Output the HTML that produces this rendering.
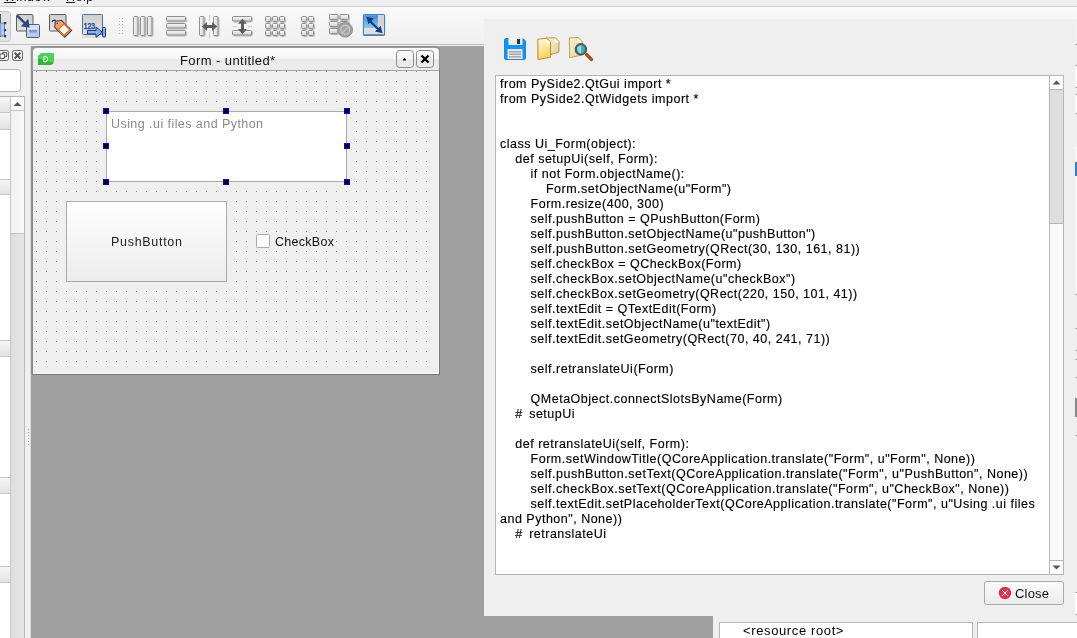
<!DOCTYPE html>
<html><head><meta charset="utf-8">
<style>
*{box-sizing:border-box}
html,body{margin:0;padding:0}
body{width:1077px;height:638px;overflow:hidden;position:relative;background:#efefef;font-family:"Liberation Sans",sans-serif;font-size:12px;color:#000}
.a{position:absolute}
.t{white-space:pre;position:absolute;line-height:15px}
.cl{height:15px;line-height:15px;white-space:pre;font-size:12.5px;letter-spacing:0.5px;-webkit-text-stroke:0.15px #000}
svg{position:absolute;overflow:visible}
body>div.t,#code,#dlg>div.t{will-change:transform}
</style></head><body>
<!-- menubar remnant -->
<div class="a" style="left:0;top:0;width:1077px;height:7px;background:#efefef"></div>
<div class="t" style="left:4px;top:-10px;font-size:12.5px;letter-spacing:0.5px;color:#111">Window</div>
<div class="t" style="left:66px;top:-10px;font-size:12.5px;letter-spacing:0.5px;color:#111">Help</div>
<div class="a" style="left:0;top:2px;width:1077px;height:4px;background:#efefef"></div>
<div class="a" style="left:4px;top:2px;width:12px;height:1px;background:#222"></div>
<div class="a" style="left:66px;top:2px;width:9px;height:1px;background:#222"></div>
<div class="a" style="left:87px;top:1px;width:1px;height:3px;background:#222"></div>
<div class="a" style="left:0;top:6px;width:1077px;height:1px;background:#d0d0d0"></div>
<!-- toolbar -->
<div class="a" style="left:0;top:7px;width:1077px;height:37px;background:linear-gradient(#f9f9f9,#f0f0f0)"></div>
<div class="a" style="left:0;top:44px;width:1077px;height:1px;background:#bdbdbd"></div>
<div class="a" style="left:0;top:45px;width:1077px;height:1px;background:#f2f2f2"></div>
<svg style="left:0;top:0" width="400" height="45" viewBox="0 0 400 45">
<defs>
<linearGradient id="bdk" x1="0" y1="0" x2="0" y2="1"><stop offset="0" stop-color="#5a7db8"/><stop offset="1" stop-color="#a8c6ee"/></linearGradient>
<linearGradient id="asz" x1="0" y1="0" x2="0" y2="1"><stop offset="0" stop-color="#4f86d2"/><stop offset="1" stop-color="#86cdea"/></linearGradient>
<filter id="sh" x="-20%" y="-20%" width="150%" height="150%"><feDropShadow dx="0.8" dy="0.8" stdDeviation="0.4" flood-color="#000" flood-opacity="0.3"/></filter>
<linearGradient id="gg" x1="0" y1="0" x2="0" y2="1"><stop offset="0" stop-color="#cfcfcf"/><stop offset="1" stop-color="#e4e4e4"/></linearGradient>
<linearGradient id="bb" x1="0" y1="0" x2="0" y2="1"><stop offset="0" stop-color="#d6e6fb"/><stop offset="1" stop-color="#a9c8f2"/></linearGradient>
<linearGradient id="bar" x1="0" y1="0" x2="1" y2="0"><stop offset="0" stop-color="#fafafa"/><stop offset="1" stop-color="#cfcfcf"/></linearGradient>
<linearGradient id="barh" x1="0" y1="0" x2="0" y2="1"><stop offset="0" stop-color="#fafafa"/><stop offset="1" stop-color="#cfcfcf"/></linearGradient>
</defs>
<!-- highlighted first button -->
<rect x="-4" y="11.5" width="14.5" height="30" rx="3" fill="#e2e2e2" stroke="#c4c4c4"/>
<rect x="-2" y="14" width="3" height="23" fill="#555"/>
<rect x="0" y="23" width="4.5" height="13" fill="#a9c8f4" stroke="#5a6e8a" stroke-width="0.8"/>
<rect x="4" y="22" width="2.2" height="2.2" fill="#1f3f78"/>
<rect x="4" y="29" width="2.2" height="2.2" fill="#1f3f78"/>
<rect x="4" y="35" width="2.2" height="2.2" fill="#1f3f78"/>
<!-- signals/slots -->
<rect x="16.5" y="14.5" width="16.5" height="16.5" rx="1" fill="url(#gg)" stroke="#5c5c5c"/>
<rect x="26.5" y="24.5" width="13" height="13" rx="1" fill="url(#bb)" stroke="#5c5c5c"/>
<rect x="29" y="29.5" width="8" height="4" fill="url(#bdk)"/>
<rect x="29" y="28.5" width="8" height="1" fill="#fff"/>
<path d="M17.2 15.6 L24.5 22.9" stroke="#2b4a78" stroke-width="2.3"/><path d="M29.6 27.8 L20.8 26.3 L28.3 18.8 Z" fill="#2b4a78"/>
<!-- buddy -->
<rect x="49.5" y="14.5" width="16.5" height="16.5" rx="1" fill="url(#gg)" stroke="#5c5c5c"/>
<path d="M52 22 Q53 19.5 56 20.5" stroke="#222" stroke-width="1.2" fill="none"/>
<path d="M55.3 21.3 L61.5 20.3 L71.6 30.4 L64.8 37.2 L54.7 27.4 Z" fill="#f9a060" stroke="#2c4468" stroke-width="1.1"/>
<path d="M64 23.8 L69.8 30 L64 35.6 L58.3 29.6 Z" fill="#fff" stroke="#ff6a10" stroke-width="1.4"/>
<circle cx="57.2" cy="23.2" r="0.8" fill="#2c4468"/>
<!-- tab order -->
<rect x="82" y="35" width="18" height="3" fill="#d6d6d6" opacity="0.7"/>
<rect x="82.5" y="14.5" width="20" height="20" rx="1" fill="url(#gg)" stroke="#51709e"/>
<text x="83.8" y="28.9" font-family="Liberation Sans" font-size="9.2" fill="#1a4ca6" stroke="#1a4ca6" stroke-width="0.5" textLength="11.2" lengthAdjust="spacingAndGlyphs">123</text>
<path d="M87.5 30.5 L96 30.5 L96 27 L102.3 32.2 L96 37.3 L96 34 L87.5 34 Z" fill="#7fb2f2" stroke="#1d3566" stroke-width="1"/>
<rect x="102.5" y="27.5" width="3" height="9.5" rx="1" fill="#7fb0f2" stroke="#1d3566" stroke-width="1"/>
<!-- separator -->
<g fill="#b8b8b8">
<rect x="119" y="18" width="1" height="1"/><rect x="122" y="18" width="1" height="1"/>
<rect x="119" y="21" width="1" height="1"/><rect x="122" y="21" width="1" height="1"/>
<rect x="119" y="24" width="1" height="1"/><rect x="122" y="24" width="1" height="1"/>
<rect x="119" y="27" width="1" height="1"/><rect x="122" y="27" width="1" height="1"/>
<rect x="119" y="30" width="1" height="1"/><rect x="122" y="30" width="1" height="1"/>
<rect x="119" y="33" width="1" height="1"/><rect x="122" y="33" width="1" height="1"/>
</g>
<!-- layout horiz -->
<g stroke="#8e8e8e" stroke-width="1" filter="url(#sh)" fill="url(#bar)">
<rect x="133.5" y="16.5" width="4.5" height="19" rx="1"/>
<rect x="140.5" y="16.5" width="4.5" height="19" rx="1"/>
<rect x="147.5" y="16.5" width="4.5" height="19" rx="1"/>
</g>
<!-- layout vert -->
<g stroke="#8e8e8e" stroke-width="1" filter="url(#sh)" fill="url(#barh)">
<rect x="166.5" y="16.5" width="19" height="4.5" rx="1"/>
<rect x="166.5" y="23.5" width="19" height="4.5" rx="1"/>
<rect x="166.5" y="30.5" width="19" height="4.5" rx="1"/>
</g>
<!-- splitter h -->
<g stroke="#8e8e8e" stroke-width="1" filter="url(#sh)" fill="url(#bar)">
<rect x="199.5" y="16.5" width="4.5" height="19" rx="1"/>
<rect x="213.5" y="16.5" width="4.5" height="19" rx="1"/>
</g>
<path d="M209.5 15 V21 M209.5 32 V38" stroke="#777" stroke-width="0.6" opacity="0.6"/>
<path d="M201.8 26.5 L207 22 V25 H212 V22 L217.2 26.5 L212 31 V28 H207 V31 Z" fill="#5e5e5e"/>
<!-- splitter v -->
<g stroke="#8e8e8e" stroke-width="1" filter="url(#sh)" fill="url(#barh)">
<rect x="232.5" y="16.5" width="19" height="4.5" rx="1"/>
<rect x="232.5" y="30.5" width="19" height="4.5" rx="1"/>
</g>
<path d="M233 26.5 H237 M248 26.5 H252" stroke="#777" stroke-width="0.6" opacity="0.6"/>
<path d="M242.5 18.7 L247 23.8 H244 V29 H247 L242.5 34.2 L238 29 H241 V23.8 H238 Z" fill="#5e5e5e"/>
<!-- grid -->
<g stroke="#8e8e8e" stroke-width="1" filter="url(#sh)" fill="url(#barh)">
<rect x="265.5" y="16.5" width="5" height="5" rx="1"/><rect x="272.5" y="16.5" width="5" height="5" rx="1"/><rect x="279.5" y="16.5" width="5" height="5" rx="1"/>
<rect x="265.5" y="23.5" width="5" height="5" rx="1"/><rect x="272.5" y="23.5" width="5" height="5" rx="1"/><rect x="279.5" y="23.5" width="5" height="5" rx="1"/>
<rect x="265.5" y="30.5" width="5" height="5" rx="1"/><rect x="272.5" y="30.5" width="5" height="5" rx="1"/><rect x="279.5" y="30.5" width="5" height="5" rx="1"/>
<!-- form layout -->
<rect x="301.5" y="16.5" width="5" height="5" rx="1"/><rect x="308.5" y="16.5" width="5" height="5" rx="1"/>
<rect x="301.5" y="23.5" width="5" height="5" rx="1"/><rect x="308.5" y="23.5" width="5" height="5" rx="1"/>
<rect x="301.5" y="30.5" width="5" height="5" rx="1"/><rect x="308.5" y="30.5" width="5" height="5" rx="1"/>
<!-- break layout -->
<rect x="329.5" y="14.5" width="8.5" height="5" rx="0.8"/><rect x="340" y="14.5" width="8.5" height="5" rx="0.8"/>
<rect x="329.5" y="21.5" width="8.5" height="5" rx="0.8"/><rect x="340" y="21.5" width="8.5" height="5" rx="0.8"/>
<rect x="329.5" y="28.5" width="8.5" height="5" rx="0.8"/>
</g>
<circle cx="345.2" cy="29.8" r="7.3" fill="#a4a4a4" stroke="#8e8e8e"/>
<circle cx="345.2" cy="29.8" r="4.4" fill="none" stroke="#c8c8c8" stroke-width="1.2"/>
<path d="M342.2 32.8 L348.2 26.8" stroke="#c8c8c8" stroke-width="1.2"/>
<!-- adjust size -->
<rect x="363.5" y="14.5" width="21" height="21" rx="1" fill="#e4e4e4" stroke="#3b7fd8" stroke-width="1.2"/>
<rect x="364.2" y="15.2" width="13.8" height="12.8" fill="url(#asz)"/>
<rect x="378" y="15.2" width="5.8" height="19.6" fill="#d4d4d4"/>
<rect x="364.2" y="28" width="19.6" height="6.8" fill="#e0e0e0"/>
<rect x="364.2" y="34" width="19.6" height="0.8" fill="#777"/>
<path d="M369.5 20.5 L380 31" stroke="#0d3f8c" stroke-width="2.2"/>
<path d="M366.5 16.8 L374 18.5 L368.3 24.2 Z M382.5 33.2 L375 31.5 L380.7 25.8 Z" fill="#0d3f8c"/>
</svg>
<!-- left dock -->
<div class="a" style="left:0;top:46px;width:31px;height:592px;background:#efefef"></div>
<svg style="left:0;top:46px" width="31" height="592" viewBox="0 0 31 592">
<!-- float / close buttons -->
<rect x="-3.5" y="4.5" width="12" height="10" rx="2" fill="#f4f4f4" stroke="#686868"/>
<rect x="2.5" y="6.5" width="4.2" height="4.2" rx="0.8" fill="#fafafa" stroke="#555" stroke-width="1.1"/>
<rect x="0" y="8" width="4.5" height="4.5" rx="0.8" fill="#fff" stroke="#555" stroke-width="1.1"/>
<rect x="12.5" y="4.5" width="10" height="10" rx="2" fill="#f4f4f4" stroke="#686868"/>
<path d="M14.6 6.7 L20.4 12.5 M20.4 6.7 L14.6 12.5" stroke="#555" stroke-width="2"/>
<!-- line edit -->
<rect x="-3.5" y="23.5" width="24" height="22" rx="3" fill="#fff" stroke="#b4b4b4"/>
<!-- table outer -->
<rect x="-1" y="50.5" width="26" height="541" fill="#fff" stroke="#b4b4b4"/>
</svg>
<!-- headers -->
<div class="a" style="left:0;top:97px;width:11px;height:16px;background:linear-gradient(#f6f6f6,#e2e2e2);border-right:1px solid #c6c6c6;border-bottom:1px solid #c6c6c6"></div>
<div class="a" style="left:0;top:113px;width:11px;height:17px;background:linear-gradient(#f6f6f6,#e2e2e2);border-right:1px solid #c6c6c6;border-bottom:1px solid #c6c6c6"></div>
<div class="a" style="left:0;top:130px;width:11px;height:49px;background:#fff;border-right:1px solid #c6c6c6"></div>
<div class="a" style="left:0;top:179px;width:11px;height:16px;background:linear-gradient(#f6f6f6,#e2e2e2);border-right:1px solid #c6c6c6;border-top:1px solid #c6c6c6;border-bottom:1px solid #c6c6c6"></div>
<div class="a" style="left:0;top:195px;width:11px;height:145px;background:#fff;border-right:1px solid #c6c6c6"></div>
<div class="a" style="left:0;top:340px;width:11px;height:17px;background:linear-gradient(#f6f6f6,#e2e2e2);border-right:1px solid #c6c6c6;border-top:1px solid #c6c6c6;border-bottom:1px solid #c6c6c6"></div>
<div class="a" style="left:0;top:357px;width:11px;height:120px;background:#fff;border-right:1px solid #c6c6c6"></div>
<div class="a" style="left:0;top:477px;width:11px;height:17px;background:linear-gradient(#f6f6f6,#e2e2e2);border-right:1px solid #c6c6c6;border-top:1px solid #c6c6c6;border-bottom:1px solid #c6c6c6"></div>
<div class="a" style="left:0;top:494px;width:11px;height:73px;background:#fff;border-right:1px solid #c6c6c6"></div>
<div class="a" style="left:0;top:566px;width:11px;height:17px;background:linear-gradient(#f6f6f6,#e2e2e2);border-right:1px solid #c6c6c6;border-top:1px solid #c6c6c6;border-bottom:1px solid #c6c6c6"></div>
<div class="a" style="left:0;top:583px;width:11px;height:55px;background:#fff;border-right:1px solid #c6c6c6"></div>
<!-- scrollbar -->
<div class="a" style="left:11px;top:97px;width:14px;height:541px;background:linear-gradient(90deg,#f0f0f0,#fafafa);border-right:1px solid #b8b8b8"></div>
<div class="a" style="left:11px;top:97px;width:13px;height:14px;background:#fff;border-bottom:1px solid #c6c6c6"></div>
<svg style="left:11px;top:97px" width="13" height="14"><path d="M2.5 9 L6.5 5 L10.5 9 Z" fill="#555"/></svg>
<div class="a" style="left:11px;top:233px;width:14px;height:405px;background:linear-gradient(90deg,#dedede,#e6e6e6);border-right:1px solid #b8b8b8;border-top:1px solid #c0c0c0"></div>
<!-- splitter -->
<div class="a" style="left:25px;top:46px;width:6px;height:592px;background:#efefef;border-right:1px solid #dadada"></div>
<g></g>
<div class="a" style="left:28px;top:429px;width:1px;height:1px;background:#aaa;box-shadow:0 3px #aaa,0 6px #aaa,0 9px #aaa,0 12px #aaa,0 15px #aaa"></div>
<!-- MDI area -->
<div class="a" style="left:31px;top:46px;width:1046px;height:592px;background:#a0a0a0"></div>
<!-- form subwindow -->
<div class="a" style="left:31px;top:46px;width:409px;height:329px;background:#a0a0a0"></div>
<svg style="left:31px;top:46px" width="409" height="329" viewBox="0 0 409 329">
<defs>
<linearGradient id="tb" x1="0" y1="0" x2="0" y2="1"><stop offset="0" stop-color="#fcfcfc"/><stop offset="0.5" stop-color="#f5f5f5"/><stop offset="0.5" stop-color="#e9e9e9"/><stop offset="1" stop-color="#ececec"/></linearGradient>
<pattern id="dots" x="5" y="25" width="10" height="10" patternUnits="userSpaceOnUse"><rect width="1" height="1" fill="#8c8c8c"/></pattern>
<linearGradient id="pb" x1="0" y1="0" x2="0" y2="1"><stop offset="0" stop-color="#fefefe"/><stop offset="1" stop-color="#ececec"/></linearGradient>
</defs>
<!-- outer frame -->
<path d="M0.5 328.5 V4 Q0.5 0.5 4 0.5 H404 Q408.5 0.5 408.5 4 V328.5 Z" fill="#9c9c9c" stroke="#8f8f8f"/>
<!-- title bar -->
<path d="M2 24 V6 Q2 2 6 2 H404 Q408 2 408 6 V24 Z" fill="url(#tb)"/>
<rect x="1" y="24" width="407" height="1" fill="#a4a4a4"/>
<!-- content -->
<rect x="1" y="25" width="407" height="303" fill="#efefef"/>
<rect x="1" y="25" width="1" height="303" fill="#8a8a8a"/>
<rect x="407" y="25" width="1" height="302" fill="#f9f9f9"/>
<rect x="408" y="24" width="1" height="305" fill="#777"/>
<rect x="2" y="327" width="406" height="1" fill="#f9f9f9"/>
<rect x="1" y="328" width="408" height="1" fill="#777"/>
<rect x="5" y="25" width="400" height="300" fill="url(#dots)"/>
<!-- D icon -->
<path d="M7 10 L10 7 H23 V16 L20 19 H7 Z" fill="#4fcf5c"/>
<path d="M7 12.5 L23 17 L20 19 H7 Z" fill="#2cb43c"/>
<path d="M12.8 10.5 H14.3 Q16.6 10.5 16.6 13.2 Q16.6 15.9 14.3 15.9 H12.8 Z" fill="none" stroke="#fff" stroke-width="1"/>
<!-- title buttons -->
<rect x="365.5" y="4.5" width="17" height="17" rx="3" fill="none" stroke="#8a8a8a"/>
<path d="M372 14 L373.5 12.5 L375 14 Z" fill="#000" stroke="#000" stroke-width="1"/>
<rect x="385.5" y="4.5" width="17" height="17" rx="3" fill="none" stroke="#8a8a8a"/>
<path d="M390.5 9.5 L397.5 16.5 M397.5 9.5 L390.5 16.5" stroke="#000" stroke-width="2.4"/>
<!-- push button -->
<rect x="35.5" y="155.5" width="160" height="80" rx="1" fill="url(#pb)" stroke="#a9a9a9"/>
<!-- checkbox -->
<rect x="225.5" y="188.5" width="13" height="13" rx="1" fill="#fff" stroke="#a9a9a9"/>
<!-- text edit -->
<rect x="75.5" y="65.5" width="240" height="70" fill="#fff" stroke="#a9a9a9"/>
<!-- handles -->
<g fill="#000" stroke="#0000ff">
<rect x="72.5" y="62.5" width="5" height="5"/>
<rect x="192.5" y="62.5" width="5" height="5"/>
<rect x="313.5" y="62.5" width="5" height="5"/>
<rect x="72.5" y="97.5" width="5" height="5"/>
<rect x="313.5" y="97.5" width="5" height="5"/>
<rect x="72.5" y="133.5" width="5" height="5"/>
<rect x="192.5" y="133.5" width="5" height="5"/>
<rect x="313.5" y="133.5" width="5" height="5"/>
</g>
</svg>
<div class="t" style="left:180px;top:53px;font-size:13px;letter-spacing:0.42px;color:#111">Form - untitled*</div>
<div class="t" style="left:111px;top:235px;font-size:12.5px;letter-spacing:0.7px;color:#222">PushButton</div>
<div class="t" style="left:275px;top:235px;font-size:12.5px;letter-spacing:0.28px;color:#111">CheckBox</div>
<div class="t" style="left:111px;top:117px;font-size:12.5px;letter-spacing:0.44px;color:#8a8a8a">Using .ui files and Python</div>
<!-- right dock remnants -->
<div class="a" style="left:713px;top:560px;width:364px;height:78px;background:#efefef"></div>
<div class="a" style="left:719px;top:622px;width:254px;height:30px;background:#fff;border:1px solid #b4b4b4"></div>
<div class="t" style="left:743px;top:623px;font-size:13px;letter-spacing:0.62px">&lt;resource root&gt;</div>
<div class="a" style="left:977px;top:622px;width:120px;height:30px;background:#fff;border:1px solid #b4b4b4"></div>
<div class="a" style="left:1075px;top:19px;width:2px;height:25px;background:#f1f1f1"></div>
<div class="a" style="left:1075px;top:44px;width:2px;height:575px;background:#efefef"></div>
<div class="a" style="left:1075px;top:66px;width:2px;height:21px;background:#fafafa"></div>
<div class="a" style="left:1075px;top:95px;width:2px;height:18px;background:#fafafa"></div>
<div class="a" style="left:1075px;top:147px;width:2px;height:146px;background:#f7f7f7"></div>
<g></g>
<div class="a" style="left:1075px;top:44px;width:2px;height:1px;background:#aaa"></div>
<div class="a" style="left:1075px;top:65px;width:2px;height:1px;background:#aaa"></div>
<div class="a" style="left:1075px;top:87px;width:2px;height:1px;background:#aaa"></div>
<div class="a" style="left:1075px;top:94px;width:2px;height:1px;background:#aaa"></div>
<div class="a" style="left:1075px;top:113px;width:2px;height:1px;background:#aaa"></div>
<div class="a" style="left:1075px;top:162px;width:2px;height:14px;background:#2f7fd0"></div>
<div class="a" style="left:1075px;top:294px;width:2px;height:1px;background:#aaa"></div>
<div class="a" style="left:1075px;top:328px;width:2px;height:1px;background:#aaa"></div>
<div class="a" style="left:1075px;top:350px;width:2px;height:1px;background:#aaa"></div>
<div class="a" style="left:1075px;top:359px;width:2px;height:1px;background:#aaa"></div>
<div class="a" style="left:1075px;top:377px;width:2px;height:1px;background:#aaa"></div>
<div class="a" style="left:1075px;top:398px;width:2px;height:19px;background:#888"></div>
<div class="a" style="left:1075px;top:435px;width:2px;height:1px;background:#aaa"></div>
<div class="a" style="left:1075px;top:592px;width:2px;height:23px;background:#fff;border-top:1px solid #aaa;border-bottom:1px solid #aaa"></div>
<!-- dialog -->
<div id="dlg" class="a" style="left:484px;top:19px;width:591px;height:597px;background:#efefef">
<svg style="left:20px;top:19px" width="100" height="24" viewBox="0 0 100 24">
<defs>
<linearGradient id="lbl" x1="0" y1="0" x2="1" y2="1"><stop offset="0" stop-color="#fff"/><stop offset="1" stop-color="#d8d8d8"/></linearGradient>
<linearGradient id="doc" x1="0" y1="0" x2="0.3" y2="1"><stop offset="0" stop-color="#fffbe8"/><stop offset="1" stop-color="#f5d560"/></linearGradient>
<linearGradient id="doc2" x1="0" y1="0" x2="1" y2="1"><stop offset="0" stop-color="#f8f2d0"/><stop offset="1" stop-color="#ddd2a0"/></linearGradient>
<linearGradient id="lens" x1="0" y1="0" x2="1" y2="0"><stop offset="0" stop-color="#58c8d4"/><stop offset="0.5" stop-color="#98e4ea"/><stop offset="1" stop-color="#2e9ab0"/></linearGradient>
</defs>
<!-- save -->
<path d="M0.5 2 Q0.5 0.5 2 0.5 H19 L21.5 3 V20 Q21.5 21.5 20 21.5 H2 Q0.5 21.5 0.5 20 Z" fill="#0d96fa" stroke="#1a70c0" stroke-width="0.8"/>
<rect x="4.5" y="0" width="14" height="7" fill="url(#lbl)"/>
<rect x="13" y="1" width="3" height="5" fill="#333"/>
<rect x="3.5" y="11" width="15" height="10" fill="#e6e6e6"/>
<rect x="5" y="13" width="12" height="1.5" fill="#a8a8a8"/>
<rect x="5" y="15.5" width="12" height="1.5" fill="#a8a8a8"/>
<rect x="5" y="18" width="12" height="1.5" fill="#a8a8a8"/>
<!-- copy docs -->
<path d="M42 0 L51.5 -0.2 L55 3.5 L55 14 L47 16.5 Z" fill="url(#doc2)" stroke="#c0902a" stroke-width="0.9"/>
<path d="M50.5 0.5 Q50 3.5 52.5 5 Q54.5 4 54.5 3.5 Z" fill="#fff"/>
<path d="M33.8 1.2 L42.6 0.2 L46.5 4 L46.5 19.2 L34 21.5 Z" fill="url(#doc)" stroke="#c08a20" stroke-width="1"/>
<path d="M42 0.8 Q41.5 4.5 44.5 6.8 Q46.5 5.5 46 4 Z" fill="#fff"/>
<!-- preview -->
<path d="M65.3 -0.2 L74.3 -0.4 L78.2 3.5 L78.2 17 L65.6 19.6 Z" fill="url(#doc2)" stroke="#c49a30" stroke-width="0.9"/>
<path d="M73.5 0.3 Q73 3.5 75.8 5.3 Q77.8 4.3 77.5 3.5 Z" fill="#fff"/>
<path d="M82.5 16.5 L87.5 21.5" stroke="#a84c12" stroke-width="3.2" stroke-linecap="round"/>
<circle cx="76.9" cy="11.3" r="5.2" fill="url(#lens)" stroke="#4f565c" stroke-width="2.1"/>
<rect x="77" y="6.5" width="3.5" height="9.6" fill="#2f8ea6" opacity="0.55"/>
</svg>
<!-- text edit -->
<div class="a" style="left:11px;top:56px;width:569px;height:500px;background:#fff;border:1px solid #b4b4b4"></div>
<div id="code" class="a" style="left:16px;top:58px">
<div class="cl">from PySide2.QtGui import *</div>
<div class="cl">from PySide2.QtWidgets import *</div>
<div class="cl"></div>
<div class="cl"></div>
<div class="cl">class Ui_Form(object):</div>
<div class="cl" style="padding-left:15.3px">def setupUi(self, Form):</div>
<div class="cl" style="padding-left:30.6px">if not Form.objectName():</div>
<div class="cl" style="padding-left:45.9px">Form.setObjectName(u"Form")</div>
<div class="cl" style="padding-left:30.6px">Form.resize(400, 300)</div>
<div class="cl" style="padding-left:30.6px">self.pushButton = QPushButton(Form)</div>
<div class="cl" style="padding-left:30.6px">self.pushButton.setObjectName(u"pushButton")</div>
<div class="cl" style="padding-left:30.6px">self.pushButton.setGeometry(QRect(30, 130, 161, 81))</div>
<div class="cl" style="padding-left:30.6px">self.checkBox = QCheckBox(Form)</div>
<div class="cl" style="padding-left:30.6px">self.checkBox.setObjectName(u"checkBox")</div>
<div class="cl" style="padding-left:30.6px">self.checkBox.setGeometry(QRect(220, 150, 101, 41))</div>
<div class="cl" style="padding-left:30.6px">self.textEdit = QTextEdit(Form)</div>
<div class="cl" style="padding-left:30.6px">self.textEdit.setObjectName(u"textEdit")</div>
<div class="cl" style="padding-left:30.6px">self.textEdit.setGeometry(QRect(70, 40, 241, 71))</div>
<div class="cl"></div>
<div class="cl" style="padding-left:30.6px">self.retranslateUi(Form)</div>
<div class="cl"></div>
<div class="cl" style="padding-left:30.6px">QMetaObject.connectSlotsByName(Form)</div>
<div class="cl" style="padding-left:15.3px"><span style="letter-spacing:2.9px">#</span> setupUi</div>
<div class="cl"></div>
<div class="cl" style="padding-left:15.3px">def retranslateUi(self, Form):</div>
<div class="cl" style="padding-left:30.6px">Form.setWindowTitle(QCoreApplication.translate("Form", u"Form", None))</div>
<div class="cl" style="padding-left:30.6px">self.pushButton.setText(QCoreApplication.translate("Form", u"PushButton", None))</div>
<div class="cl" style="padding-left:30.6px">self.checkBox.setText(QCoreApplication.translate("Form", u"CheckBox", None))</div>
<div class="cl" style="padding-left:30.6px">self.textEdit.setPlaceholderText(QCoreApplication.translate("Form", u"Using .ui files</div>
<div class="cl">and Python", None))</div>
<div class="cl" style="padding-left:15.3px"><span style="letter-spacing:2.9px">#</span> retranslateUi</div>

</div>
<!-- scrollbar -->
<div class="a" style="left:565px;top:56px;width:15px;height:500px;background:linear-gradient(90deg,#f6f6f6,#fdfdfd);border:1px solid #b4b4b4"></div>
<div class="a" style="left:565px;top:56px;width:15px;height:15px;background:#fff;border:1px solid #b4b4b4"></div>
<svg style="left:565px;top:56px" width="15" height="15"><path d="M3.5 9.5 L7.5 5.5 L11.5 9.5 Z" fill="#555"/></svg>
<div class="a" style="left:565px;top:70px;width:15px;height:135px;background:#dedede;border:1px solid #b4b4b4"></div>
<div class="a" style="left:565px;top:541px;width:15px;height:15px;background:#fff;border:1px solid #b4b4b4"></div>
<svg style="left:565px;top:541px" width="15" height="15"><path d="M3.5 5.5 L7.5 9.5 L11.5 5.5 Z" fill="#555"/></svg>
<!-- close button -->
<div class="a" style="left:500px;top:562px;width:80px;height:24px;border:1px solid #aaa;border-radius:3px;background:linear-gradient(#fbfbfb,#ebebeb)"></div>
<svg style="left:514px;top:567px" width="14" height="14" viewBox="0 0 14 14"><circle cx="7" cy="7" r="6.2" fill="#d9344e"/><path d="M4.3 4.3 L9.7 9.7 M9.7 4.3 L4.3 9.7" stroke="#fff" stroke-width="1"/></svg>
<div class="t" style="left:531px;top:567px;font-size:13px;letter-spacing:0.2px;color:#111">Close</div>
</div>
</body></html>
